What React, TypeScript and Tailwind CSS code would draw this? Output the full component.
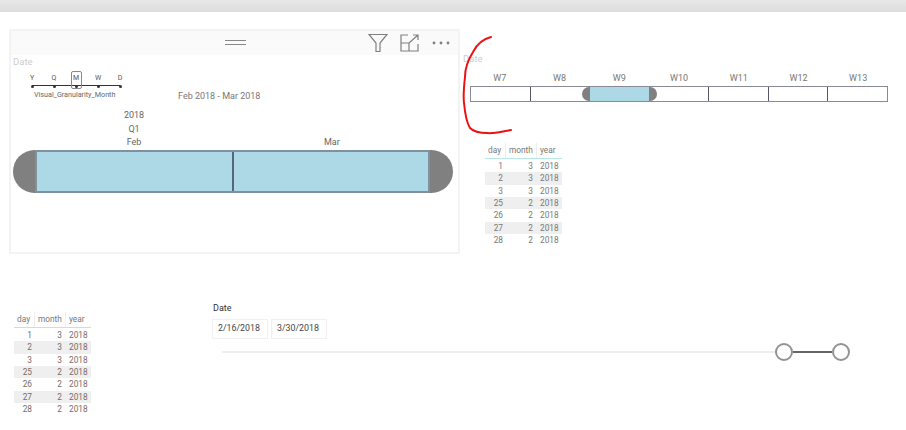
const rows = [
  [1, 3, 2018],
  [2, 3, 2018],
  [3, 3, 2018],
  [25, 2, 2018],
  [26, 2, 2018],
  [27, 2, 2018],
  [28, 2, 2018],
];

const weeks = ["W7", "W8", "W9", "W10", "W11", "W12", "W13"];
const levels = ["Y", "Q", "M", "W", "D"];

function DataTable({ warm }: { warm?: boolean }) {
  return (
    <div className="w-[77px] text-[8.3px] leading-[12.35px] text-[#777]">
      <div className="flex h-[16px] items-start border-b border-[#b5e8e4] text-[#777]">
        <div className="h-[15px] w-[21px] border-r border-[#eee] pl-[3px] pt-[1px]">day</div>
        <div className="h-[15px] w-[31px] border-r border-[#eee] pl-[3px] pt-[1px]">month</div>
        <div className="pl-[3px] pt-[1px]">year</div>
      </div>
      <div className="pt-[1px]">
        {rows.map((r, i) => (
          <div key={r[0]} className={`flex ${i % 2 === 1 ? "bg-[#efefef]" : ""} ${warm ? "text-[#7a6a62]" : ""}`}>
            <div className="w-[21px] pr-[3px] text-right">{r[0]}</div>
            <div className="w-[31px] pr-[4px] text-right">{r[1]}</div>
            <div className="pl-[3px]">{r[2]}</div>
          </div>
        ))}
      </div>
    </div>
  );
}

function PanelIcons() {
  return (
    <div className="flex items-center gap-[12px] text-[#808080]">
      <svg width="20" height="20" viewBox="0 0 20 20" fill="none" stroke="currentColor" strokeWidth="1.2">
        <path d="M1 1.5h18l-7 8.5v8.5H8V10z" />
      </svg>
      <svg width="19" height="18" viewBox="0 0 19 18" fill="none" stroke="currentColor" strokeWidth="1.2">
        <path d="M8 1H1v16h17v-7M1 9h8v8M9 9l9-8M13 1h5v5" />
      </svg>
      <svg width="20" height="6" viewBox="0 0 20 6" fill="currentColor">
        <circle cx="3" cy="3" r="1.4" />
        <circle cx="10" cy="3" r="1.4" />
        <circle cx="17" cy="3" r="1.4" />
      </svg>
    </div>
  );
}

function Granularity() {
  return (
    <div className="pl-[21px]">
      <div className="relative h-[14px] w-[88px] border-b border-[#333]">
        {levels.map((l, i) => (
          <div
            key={l}
            className="absolute top-[2px] flex h-[13px] w-[10px] flex-col items-center text-[7px] leading-[9px] text-[#555]"
            style={{ left: i * 22 - 5 }}
          >
            {l}
            <span className="absolute bottom-[-1px] h-[3px] w-[3px] rounded-full bg-[#333]" />
          </div>
        ))}
        <div className="absolute left-[39px] top-[-1px] h-[18px] w-[11px] rounded-[2px] border border-[#888]" />
      </div>
    </div>
  );
}

export default function App() {
  return (
    <div className="relative h-[430px] w-[906px] overflow-hidden bg-white font-['Roboto',sans-serif]">
      <div className="h-[12px] bg-gradient-to-b from-[#e8e8e8] to-[#dcdcdc]" />

      <div className="mt-[17px] flex items-start pl-[9px]">
        <div className="h-[225px] w-[451px] border-2 border-[#f3f3f3] bg-white">
          <div className="relative flex h-[24px] items-center justify-end bg-[#fafafa] pr-[7px]">
            <div className="absolute left-[214px] top-[9px] h-[5px] w-[21px] border-y border-[#888]" />
            <PanelIcons />
          </div>
          <div className="pl-[2px] pt-[1px] text-[9.5px] leading-[12px] text-[#ccc]">Date</div>

          <div className="mt-[4px] flex h-[23px] items-start">
            <Granularity />
          </div>
          <div className="relative -mt-[5px] h-[14px] text-[7.2px] leading-[10px] text-[#666]">
            <div className="pl-[23px]">Visual_Granularity_Month</div>
            <div className="absolute left-[167px] top-[-1px] text-[9px] leading-[14px] text-[#777]">Feb 2018 - Mar 2018</div>
          </div>

          <div className="mt-[5px] text-[9px] leading-[13.5px] text-[#666]">
            <div className="w-[246px] text-center">2018</div>
            <div className="w-[246px] text-center">Q1</div>
            <div className="flex">
              <div className="w-[246px] text-center">Feb</div>
              <div className="ml-[67px]">Mar</div>
            </div>
          </div>

          <div className="flex h-[43px] pl-[2px]">
            <div className="w-[22px] rounded-l-[22px] bg-[#808080]" />
            <div className="flex w-[395px] border-2 border-[#7f919f] bg-[#add8e6]">
              <div className="w-[197px] border-r-2 border-[#55677a]" />
            </div>
            <div className="w-[23px] rounded-r-[23px] bg-[#808080]" />
          </div>
        </div>

        <div className="ml-[3px] w-[430px]">
          <div className="h-[31px] pt-[24px] text-[9.5px] leading-[12px] text-[#ccc]">Date</div>
          <div className="ml-[7px] mt-[12px] flex w-[418px] text-center text-[9px] leading-[13px] text-[#777]">
            {weeks.map((w) => (
              <div key={w} className="flex-1">{w}</div>
            ))}
          </div>
          <div className="ml-[7px] mt-[1px] flex h-[16px] w-[418px] border border-[#8a8a96]">
            {weeks.map((w, i) => (
              <div
                key={w}
                className={`relative flex-1 ${i < 6 ? "border-r border-[#55566a]" : ""} ${w === "W9" ? "bg-[#add8e6]" : ""}`}
              >
                {w === "W9" && (
                  <>
                    <span className="absolute left-[-8px] top-0 h-[14px] w-[8px] rounded-l-[8px] bg-[#808080]" />
                    <span className="absolute right-[-8px] top-0 h-[14px] w-[8px] rounded-r-[8px] bg-[#808080]" />
                  </>
                )}
              </div>
            ))}
          </div>
          <div className="ml-[22px] mt-[41px]">
            <DataTable />
          </div>
        </div>
      </div>

      <div className="mt-[49px] flex items-start pl-[14px]">
        <div className="pt-[9px]">
          <DataTable warm />
        </div>
        <div className="ml-[122px] w-[640px]">
          <div className="-mt-[1px] text-[9px] leading-[12px] text-[#333]">Date</div>
          <div className="mt-[5px] flex gap-[3px] text-[8.8px] text-[#444]">
            <div className="-ml-[1px] flex h-[20px] w-[56px] items-center border border-[#f0f0f0] pl-[5px]">2/16/2018</div>
            <div className="flex h-[20px] w-[56px] items-center border border-[#f0f0f0] pl-[5px]">3/30/2018</div>
          </div>
          <div className="ml-[9px] mt-[4px] flex h-[18px] items-center">
            <div className="h-[2px] w-[553px] bg-[#eeeeee]" />
            <div className="h-[18px] w-[18px] rounded-full border-2 border-[#939393] bg-white" />
            <div className="h-[1.5px] w-[39px] bg-[#666]" />
            <div className="h-[18px] w-[18px] rounded-full border-2 border-[#939393] bg-white" />
          </div>
        </div>
      </div>

      {/* hand drawn red bracket on top of the screenshot */}
      <svg className="absolute left-0 top-0" width="906" height="430" fill="none">
        <path
          d="M491 37C483 39 477 44 473 52C468 60 465 68 465 77C464 86 463 95 464 103C465 113 466 122 470 128C474 132 480 133 487 133C495 134 503 131 511 130"
          stroke="#ee1111"
          strokeWidth="2"
          strokeLinecap="round"
        />
      </svg>
    </div>
  );
}
